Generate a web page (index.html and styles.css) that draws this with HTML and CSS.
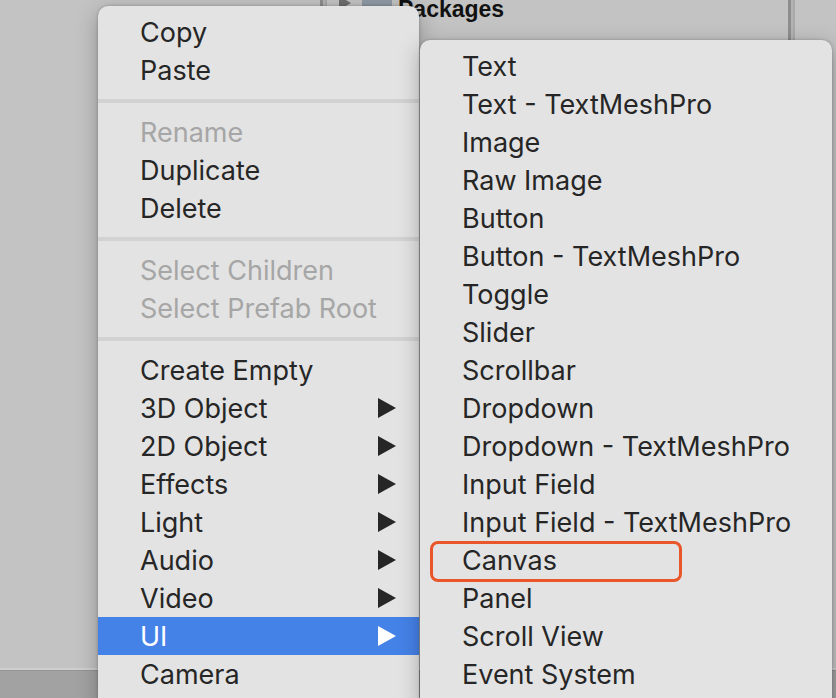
FILE: index.html
```html
<!DOCTYPE html>
<html>
<head>
<meta charset="utf-8">
<link rel="stylesheet" href="styles.css">
</head>
<body>
<div class="editor">
  <div class="panel-top">
    <span class="divider d1"></span>
    <svg class="fold" width="14" height="14" viewBox="0 0 14 14"><polygon points="1,0 13,7 1,14" fill="#6e6e6e"/></svg>
    <svg class="folder" width="30" height="24" viewBox="0 0 30 24"><rect x="0" y="2" width="30" height="22" rx="2" fill="#8f9aa6"/><rect x="0" y="0" width="12" height="5" rx="1.5" fill="#8f9aa6"/></svg>
    <span class="packages">Packages</span>
    <span class="spacer"></span>
    <span class="divider d2"></span>
  </div>
  <div class="panel-fill"></div>
  <div class="bottom-bar"></div>

  <div class="menu main-menu">
    <div class="item">Copy</div>
    <div class="item">Paste</div>
    <div class="sep"></div>
    <div class="item disabled">Rename</div>
    <div class="item">Duplicate</div>
    <div class="item">Delete</div>
    <div class="sep"></div>
    <div class="item disabled">Select Children</div>
    <div class="item disabled">Select Prefab Root</div>
    <div class="sep"></div>
    <div class="item">Create Empty</div>
    <div class="item"><span>3D Object</span><svg class="arrow" width="18" height="20" viewBox="0 0 18 20"><polygon points="0,0 18,10 0,20"/></svg></div>
    <div class="item"><span>2D Object</span><svg class="arrow" width="18" height="20" viewBox="0 0 18 20"><polygon points="0,0 18,10 0,20"/></svg></div>
    <div class="item"><span>Effects</span><svg class="arrow" width="18" height="20" viewBox="0 0 18 20"><polygon points="0,0 18,10 0,20"/></svg></div>
    <div class="item"><span>Light</span><svg class="arrow" width="18" height="20" viewBox="0 0 18 20"><polygon points="0,0 18,10 0,20"/></svg></div>
    <div class="item"><span>Audio</span><svg class="arrow" width="18" height="20" viewBox="0 0 18 20"><polygon points="0,0 18,10 0,20"/></svg></div>
    <div class="item"><span>Video</span><svg class="arrow" width="18" height="20" viewBox="0 0 18 20"><polygon points="0,0 18,10 0,20"/></svg></div>
    <div class="item active"><span>UI</span><svg class="arrow" width="18" height="20" viewBox="0 0 18 20"><polygon points="0,0 18,10 0,20"/></svg></div>
    <div class="item">Camera</div>
  </div>

  <div class="menu sub-menu">
    <div class="item">Text</div>
    <div class="item">Text - TextMeshPro</div>
    <div class="item">Image</div>
    <div class="item">Raw Image</div>
    <div class="item">Button</div>
    <div class="item">Button - TextMeshPro</div>
    <div class="item">Toggle</div>
    <div class="item">Slider</div>
    <div class="item">Scrollbar</div>
    <div class="item">Dropdown</div>
    <div class="item">Dropdown - TextMeshPro</div>
    <div class="item">Input Field</div>
    <div class="item">Input Field - TextMeshPro</div>
    <div class="item highlight-wrap">Canvas<span class="highlight-box"></span></div>
    <div class="item">Panel</div>
    <div class="item">Scroll View</div>
    <div class="item">Event System</div>
  </div>
</div>
</body>
</html>
```
FILE: styles.css
```css
html, body {
  margin: 0;
  padding: 0;
}
body {
  width: 836px;
  height: 698px;
  overflow: hidden;
  background: #c3c3c3;
}
.editor {
  position: relative;
  width: 836px;
  height: 698px;
  display: flex;
  flex-direction: column;
  background: #c3c3c3;
  overflow: hidden;
}
.panel-top {
  height: 40px;
  display: flex;
  align-items: flex-start;
  flex-shrink: 0;
}
.divider {
  width: 7px;
  height: 40px;
  box-sizing: border-box;
  border-left: 3px solid #8e8e8e;
  border-right: 2px solid #a9a9a9;
  background: #b4b4b4;
}
.d1 { margin-left: 320px; }
.fold { margin-left: 11px; margin-top: -4px; }
.folder { margin-left: 10px; margin-top: -4px; }
.packages {
  margin-left: 6px;
  margin-top: 0;
  font-family: "Liberation Sans", Arial, sans-serif;
  font-weight: bold;
  font-size: 23px;
  color: #111;
  line-height: 18px;
}
.spacer { flex: 1; }
.d2 { margin-right: 41px; }
.panel-fill { flex: 1; }
.bottom-bar {
  height: 30px;
  flex-shrink: 0;
  box-sizing: border-box;
  border-top: 2px solid #cfcfcf;
  box-shadow: inset 0 1px 0 #959595;
  background: #a2a2a2;
}

.menu {
  position: absolute;
  box-sizing: border-box;
  background: #e3e3e3;
  border-radius: 10px;
  padding: 7px 0 10px;
  font-family: Inter, "Noto Sans", sans-serif;
  font-size: 27px;
  color: #262626;
  box-shadow: 0 0 3px rgba(0,0,0,0.25), 0 6px 22px rgba(0,0,0,0.28);
}
.main-menu {
  left: 98px;
  top: 6px;
  width: 321px;
  height: 702px;
  z-index: 1;
}
.sub-menu {
  left: 420px;
  top: 40px;
  width: 412px;
  height: 668px;
  z-index: 2;
}
.item {
  height: 38px;
  display: flex;
  align-items: center;
  justify-content: space-between;
  padding-left: 42px;
  padding-right: 23px;
  white-space: nowrap;
}
.arrow { fill: #262626; flex-shrink: 0; }
.disabled { color: #a6a6a6; }
.active {
  background: #4582e8;
  color: #ffffff;
}
.active .arrow { fill: #ffffff; }
.sep {
  height: 24px;
  display: flex;
  align-items: center;
}
.sep::before {
  content: "";
  display: block;
  width: 100%;
  height: 4px;
  background: #d2d2d2;
}
.highlight-wrap { position: relative; }
.highlight-box {
  position: absolute;
  left: 10px;
  top: 0;
  width: 252px;
  height: 41px;
  box-sizing: border-box;
  border: 3px solid #e9562a;
  border-radius: 8px;
}
```
